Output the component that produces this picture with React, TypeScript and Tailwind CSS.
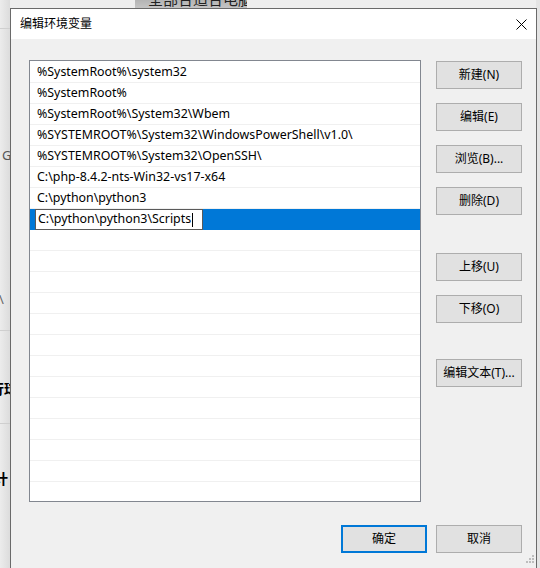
import React from "react";

const paths = [
  "%SystemRoot%\\system32",
  "%SystemRoot%",
  "%SystemRoot%\\System32\\Wbem",
  "%SYSTEMROOT%\\System32\\WindowsPowerShell\\v1.0\\",
  "%SYSTEMROOT%\\System32\\OpenSSH\\",
  "C:\\php-8.4.2-nts-Win32-vs17-x64",
  "C:\\python\\python3",
];

const editing = "C:\\python\\python3\\Scripts";

const font = {
  fontFamily: '"Noto Sans", "Noto Sans CJK SC", sans-serif',
};

function WinButton({ label, className = "" }: { label: string; className?: string }) {
  return (
    <button
      className={
        "w-[86px] h-[28px] bg-[#e1e1e1] border border-[#adadad] text-[12px] text-black flex items-center justify-center " +
        className
      }
    >
      {label}
    </button>
  );
}

function BehindWindow() {
  // the window that sits underneath the dialog (only edges visible)
  return (
    <div className="absolute inset-0 bg-[#eeeeee]">
      <div className="absolute left-0 top-0 w-[10px] h-full bg-gradient-to-r from-[#ececec] to-[#dcdcdc]" />
      <div className="absolute left-0 top-[28px] w-[10px] h-px bg-[#cfcfcf]" />
      <div className="absolute left-0 top-[330px] w-[10px] h-px bg-[#cfcfcf]" />
      <div className="absolute left-0 top-[423px] w-[10px] h-px bg-[#cfcfcf]" />
      <div className="absolute left-[2px] top-[146px] text-[13px] text-[#555]">G</div>
      <div className="absolute left-[-1px] top-[290px] text-[13px] text-[#666]">\</div>
      <div className="absolute left-[-10px] top-[378px] text-[14px] font-bold text-black">行球</div>
      <div className="absolute left-[-6px] top-[468px] text-[14px] font-bold text-black">计</div>
      <div className="absolute left-[135px] top-0 w-[112px] h-[8px] bg-gradient-to-b from-[#b4b4b4] to-[#c4c4c4] overflow-hidden">
        <div className="absolute left-[13px] top-[-10px] text-[15px] leading-[18px] text-[#222] whitespace-nowrap">
          全部合适合电脑
        </div>
      </div>
      <div className="absolute right-0 top-0 w-[4px] h-full bg-[#e4e4e4]" />
    </div>
  );
}

export default function App() {
  const emptyRows = Array.from({ length: 12 });

  return (
    <div className="relative w-[540px] h-[568px] overflow-hidden" style={font}>
      <BehindWindow />

      <div className="absolute left-[10px] top-[8px] w-[527px] h-[570px] border border-[#6a6a6a] bg-[#f0f0f0] flex flex-col">
        {/* title bar */}
        <div className="h-[30px] bg-white flex items-center justify-between pl-[9px] pr-[9px]">
          <span className="text-[12px] text-black">编辑环境变量</span>
          <svg width="11" height="11" viewBox="0 0 11 11">
            <path d="M0.5 0.5 L10.5 10.5 M10.5 0.5 L0.5 10.5" stroke="#000" strokeWidth="1" />
          </svg>
        </div>

        {/* body */}
        <div className="relative flex-1 pl-[18px] pt-[21px]">
          <div className="flex gap-[15px]">
            <div className="w-[392px] h-[442px] bg-white border border-[#828790] overflow-hidden pt-px">
              {paths.map((p) => (
                <div
                  key={p}
                  className="h-[21px] border-b border-[#f0f0f0] pl-[7px] flex items-center text-[12.4px] text-black whitespace-nowrap"
                >
                  {p}
                </div>
              ))}
              <div className="h-[21px] bg-[#0078d7] pl-[5px] flex">
                <div className="w-[168px] h-[21px] bg-white border border-[#5a5a5a] pl-[2px] flex items-center text-[12.4px] text-black whitespace-nowrap">
                  {editing}
                  <span className="inline-block w-px h-[14px] bg-black ml-[1px]" />
                </div>
              </div>
              {emptyRows.map((_, i) => (
                <div key={i} className="h-[21px] border-b border-[#f0f0f0]" />
              ))}
            </div>

            <div className="flex flex-col mt-px">
              <WinButton label="新建(N)" />
              <WinButton label="编辑(E)" className="mt-[14px]" />
              <WinButton label="浏览(B)..." className="mt-[14px]" />
              <WinButton label="删除(D)" className="mt-[14px]" />
              <WinButton label="上移(U)" className="mt-[38px]" />
              <WinButton label="下移(O)" className="mt-[14px]" />
              <WinButton label="编辑文本(T)..." className="mt-[36px]" />
            </div>
          </div>

          <div className="flex gap-[9px] mt-[23px] pl-[312px]">
            <button className="w-[86px] h-[28px] bg-[#e1e1e1] border-2 border-[#0078d7] text-[12px] text-black flex items-center justify-center">
              确定
            </button>
            <WinButton label="取消" />
          </div>

          {/* resize grip */}
          <svg className="absolute left-[515px] top-[516px]" width="8" height="8" viewBox="0 0 8 8">
            <rect x="6" y="0" width="2" height="2" fill="#bdbdbd" />
            <rect x="3" y="3" width="2" height="2" fill="#bdbdbd" />
            <rect x="6" y="3" width="2" height="2" fill="#bdbdbd" />
            <rect x="0" y="6" width="2" height="2" fill="#bdbdbd" />
            <rect x="3" y="6" width="2" height="2" fill="#bdbdbd" />
            <rect x="6" y="6" width="2" height="2" fill="#bdbdbd" />
          </svg>
        </div>
      </div>
    </div>
  );
}
